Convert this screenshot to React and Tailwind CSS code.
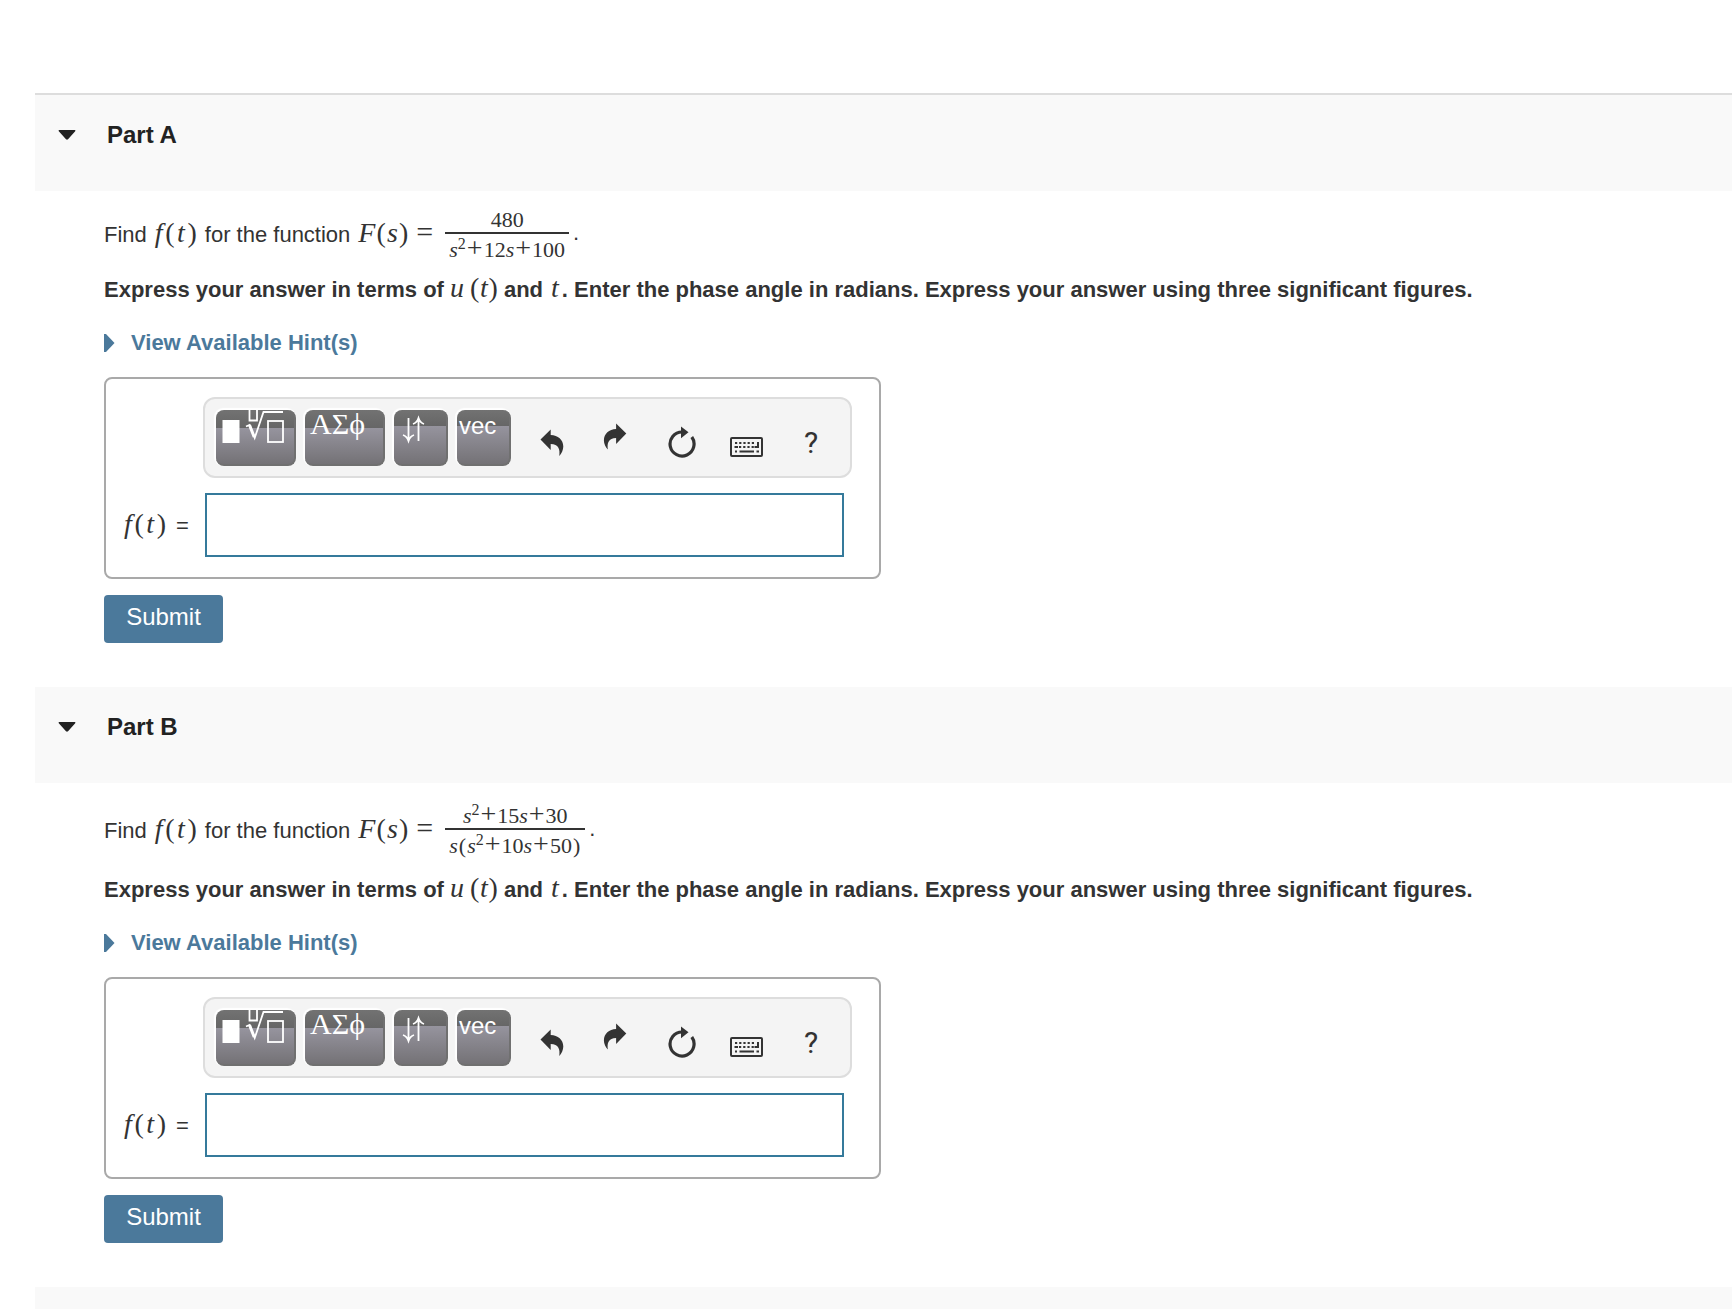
import React, { useState } from 'react';

const parts = [
  {
    id: 'a',
    title: 'Part A',
    headerClass: 'border-t-2 border-[#dddddd]',
    rowClass: '',
    numerator: <span>480</span>,
    denominator: (
      <>
        <Squared /><Plus />12<i>s</i><Plus />100
      </>
    )
  },
  {
    id: 'b',
    title: 'Part B',
    headerClass: '',
    rowClass: 'py-1',
    numerator: (
      <>
        <Squared /><Plus />15<i>s</i><Plus />30
      </>
    ),
    denominator: (
      <>
        <i>s</i>
        <span className="px-px">(</span>
        <Squared /><Plus />10<i>s</i><Plus />50
        <span className="px-px">)</span>
      </>
    )
  }
];

function Squared() {
  return (
    <>
      <i>s</i>
      <sup className="text-base leading-none">2</sup>
    </>
  );
}

function Plus() {
  return <span className="px-px text-[28px] leading-5">+</span>;
}

// Function call such as f(t), spread over a fixed width
function Call({ name, arg, className }) {
  return (
    <span className={`inline-flex items-baseline justify-between font-['Liberation_Serif',serif] text-[28px] leading-8 font-normal ${className}`}>
      {name && <i>{name}</i>}
      <span>(</span>
      <i>{arg}</i>
      <span>)</span>
    </span>
  );
}

function Fraction({ numerator, denominator }) {
  return (
    <span className="inline-flex flex-col font-['Liberation_Serif',serif] text-[22px] leading-6">
      <span className="flex h-7 items-baseline justify-center px-1 pt-1">{numerator}</span>
      <span className="h-[2px] bg-[#333333]" />
      <span className="flex h-7 items-baseline justify-center px-1 pt-1">{denominator}</span>
    </span>
  );
}

function UndoIcon() {
  return (
    <svg width="24" height="28" viewBox="0 0 24 28" fill="currentColor" aria-hidden="true">
      <path d="M0.5 10.5 L10.7 0.5 V6 C18 6.4 23.2 10.5 23.3 17.5 C23.3 21 21.5 24.5 19.3 27 C20.3 20 18.5 15.2 10.7 15 V21 Z" />
    </svg>
  );
}

function RedoIcon() {
  return (
    <svg width="24" height="28" viewBox="0 0 24 28" fill="currentColor" aria-hidden="true">
      <path d="M23.3 10.5 L13.1 0.5 V6 C6 6.4 1 10.5 0.9 17.5 C0.9 21 2.7 24.5 4.9 26.5 C3.9 20 5.5 15.2 13.1 15 V21 Z" />
    </svg>
  );
}

function ResetIcon() {
  return (
    <svg width="30" height="32" viewBox="0 0 30 32" aria-hidden="true">
      <path d="M15 6 A12 12 0 1 0 24.8 11" fill="none" stroke="currentColor" strokeWidth="3.2" />
      <path d="M14 0.5 L21.5 6.3 L14 12.3 Z" fill="currentColor" />
    </svg>
  );
}

function KeyboardIcon() {
  return (
    <svg width="34" height="20" viewBox="0 0 34 20" fill="none" stroke="currentColor" aria-hidden="true">
      <rect x="1" y="1" width="31" height="18" rx="1" strokeWidth="2" />
      <path d="M5 6 H24 M9 10 H24" strokeWidth="2" strokeDasharray="2.2 2" />
      <path d="M4.5 10 H8 M28 5 V10 H24.5" strokeWidth="2" />
      <path d="M5 14.5 H7 M9.5 14.5 H24 M26.5 14.5 H29" strokeWidth="2" />
    </svg>
  );
}

function TemplateIcon() {
  return (
    <svg width="78" height="54" viewBox="0 0 78 54" fill="none" stroke="white" aria-hidden="true">
      <rect x="6.5" y="10" width="17" height="23" fill="white" stroke="none" />
      <path d="M33.5 0 V10.5 H41 V0" strokeWidth="1.8" />
      <path d="M30 16.5 L33.5 15 L38.7 28 L47.5 2 H67" strokeWidth="1.8" />
      <path d="M33.5 15 L38.2 27" strokeWidth="3" />
      <rect x="52" y="11" width="15" height="21" strokeWidth="1.8" />
    </svg>
  );
}

function ArrowsIcon() {
  return (
    <svg width="52" height="54" viewBox="0 0 52 54" fill="none" stroke="white" strokeWidth="1.8" aria-hidden="true">
      <path d="M14.5 8 V30 M9 25 C12 26 13.5 28 14.5 31 C15.5 28 17 26 20 25" />
      <path d="M24.5 31 V9 M19 14 C22 13 23.5 11 24.5 8 C25.5 11 27 13 30 14" />
    </svg>
  );
}

const toolClass =
  'flex h-14 items-start rounded-lg border-r-2 border-b-2 border-[#707070] text-white shadow-[-1px_-1px_1px_1px_white]';

function Toolbar() {
  return (
    <div className="ml-[97px] flex h-[81px] w-[649px] items-start rounded-xl border-2 border-[#dddddd] bg-[#f4f4f4] pt-[11px] pl-[11px] text-[#333333]">
      <div className="flex gap-[9px]">
        <button type="button" aria-label="Templates" className={`${toolClass} w-20 bg-[linear-gradient(#727272_0,#666666_18px,#96949e_18px,#747276_100%)]`}>
          <TemplateIcon />
        </button>
        <button type="button" className={`${toolClass} w-20 bg-[linear-gradient(#727272_0,#666666_18px,#96949e_18px,#747276_100%)] pl-[5px] font-['Liberation_Serif',serif] text-[30px] leading-7`}>
          ΑΣϕ
        </button>
        <button type="button" aria-label="Arrows" className={`${toolClass} w-[54px] bg-[linear-gradient(#727272_0,#666666_16px,#96949e_16px,#747276_100%)]`}>
          <ArrowsIcon />
        </button>
        <button type="button" className={`${toolClass} w-[54px] bg-[linear-gradient(#727272_0,#666666_16px,#96949e_16px,#747276_100%)] pl-[2px] text-2xl leading-8`}>
          vec
        </button>
      </div>
      <button type="button" aria-label="Undo" className="mt-[19px] ml-[29px]"><UndoIcon /></button>
      <button type="button" aria-label="Redo" className="mt-[13px] ml-[39px]"><RedoIcon /></button>
      <button type="button" aria-label="Reset" className="mt-4 ml-10"><ResetIcon /></button>
      <button type="button" aria-label="Keyboard shortcuts" className="mt-[27px] ml-[33px]"><KeyboardIcon /></button>
      <button type="button" aria-label="Help" className="mt-[17px] ml-10 font-[Roboto,sans-serif] text-[30px] leading-8">?</button>
    </div>
  );
}

function Part({ part }) {
  const [answer, setAnswer] = useState('');
  const inputId = `answer-${part.id}`;

  return (
    <section>
      <header className={`flex items-center bg-[#f9f9f9] pt-6 pb-10 pl-[23px] text-[#222222] ${part.headerClass}`}>
        <button type="button" aria-label={`Collapse ${part.title}`}>
          <svg width="18" height="10" viewBox="0 0 18 10" fill="currentColor" aria-hidden="true">
            <path d="M1 0 H17 Q18 0.5 17 1.5 L10 9.3 Q9 10 8 9.3 L1 1.5 Q0 0.5 1 0 Z" />
          </svg>
        </button>
        <h2 className="ml-[31px] text-2xl leading-8 font-bold">{part.title}</h2>
      </header>

      <div className="pt-[13px] pb-11 pl-[69px]">
        {/* Question */}
        <div className={`flex items-center text-[22px] leading-8 ${part.rowClass}`}>
          <p className="flex items-baseline">
            Find
            <Call name="f" arg="t" className="ml-2 w-[42px]" />
            <span className="ml-2">for the function</span>
            <Call name="F" arg="s" className="ml-2 w-[50px]" />
            <span className="ml-2 font-['Liberation_Serif',serif] text-[30px]">=</span>
          </p>
          <span className="ml-3 flex"><Fraction numerator={part.numerator} denominator={part.denominator} /></span>
          <span className="ml-1">.</span>
        </div>

        <p className="mt-[10px] flex h-8 items-baseline text-[22px] leading-8 font-bold">
          Express your answer in terms of
          <i className="ml-[6px] font-['Liberation_Serif',serif] text-[28px] font-normal">u</i>
          <Call arg="t" className="ml-[6px] w-[28px]" />
          <span className="ml-[6px]">and</span>
          <i className="ml-2 font-['Liberation_Serif',serif] text-[28px] font-normal">t</i>
          <span className="ml-[3px]">. Enter the phase angle in radians. Express your answer using three significant figures.</span>
        </p>

        <button type="button" className="mt-[23px] flex items-center text-[22px] leading-8 font-bold text-[#4b799b]">
          <svg width="11" height="18" viewBox="0 0 11 18" fill="currentColor" aria-hidden="true">
            <path d="M0 0 H2 L10.5 9 L2 18 H0 Z" />
          </svg>
          <span className="ml-4">View Available Hint(s)</span>
        </button>

        {/* Answer editor */}
        <div className="mt-[18px] w-[777px] max-w-full rounded-lg border-2 border-[#a9a9a9] pt-[18px] pb-5">
          <Toolbar />
          <div className="mt-[15px] flex items-center">
            <label htmlFor={inputId} className="flex w-[99px] items-baseline pl-[18px] text-[22px] leading-8">
              <Call name="f" arg="t" className="w-[42px]" />
              <span className="ml-[10px]">=</span>
            </label>
            <input
              id={inputId}
              type="text"
              value={answer}
              onChange={(e) => setAnswer(e.target.value)}
              className="h-16 w-[639px] border-2 border-[#357a9b] bg-white px-3 text-2xl outline-none"
            />
          </div>
        </div>

        <button type="submit" className="mt-4 flex h-12 w-[119px] justify-center rounded bg-[#4b799b] pt-[6px] text-2xl leading-8 text-white">
          Submit
        </button>
      </div>
    </section>
  );
}

export default function App() {
  return (
    <main className="min-h-screen bg-white pt-[93px] pl-[35px] font-['Liberation_Sans',Arial,sans-serif] text-[#333333]">
      {parts.map((part) => (
        <Part key={part.id} part={part} />
      ))}
      <div className="h-[22px] bg-[#f9f9f9]" />
    </main>
  );
}
